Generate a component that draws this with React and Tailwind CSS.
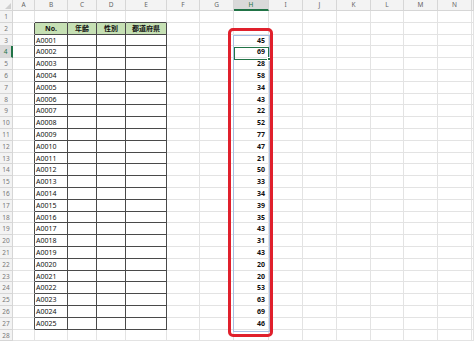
import React from 'react';

const letters = ['A', 'B', 'C', 'D', 'E', 'F', 'G', 'H', 'I', 'J', 'K', 'L', 'M', 'N', ''];
const ages = [45, 69, 28, 58, 34, 43, 22, 52, 77, 47, 21, 50, 33, 34, 39, 35, 43, 31, 43, 20, 20, 53, 63, 69, 46];
const heads = ['No.', '年齢', '性別', '都道府県'];
const rows = Array.from({ length: 28 }, (_, i) => i + 1);

const font = { fontFamily: '"Noto Sans", "Noto Sans CJK JP", sans-serif' };

function Cell({ r, c }) {
  // c: 1 = A, 2 = B ... 8 = H
  const inTable = r >= 2 && r <= 27 && c >= 2 && c <= 5;
  const leftOfTable = r >= 2 && r <= 27 && c === 1;
  const aboveTable = r === 1 && c >= 2 && c <= 5;

  let cls = 'h-[11.8px] border-r border-b overflow-hidden whitespace-nowrap text-[7px] leading-[11px] text-[#111] ';
  if (inTable) cls += 'border-[#4a4a4a] ';
  else if (leftOfTable) cls += 'border-r-[#4a4a4a] border-b-[#e3e3e3] ';
  else if (aboveTable) cls += 'border-b-[#4a4a4a] border-r-[#e3e3e3] ';
  else cls += 'border-[#e3e3e3] ';

  let content = null;
  if (r === 2 && c >= 2 && c <= 5) {
    cls += 'bg-[#c6e0b4] font-bold text-center ';
    content = heads[c - 2];
  } else if (inTable && c === 2) {
    cls += 'pl-[1px] ';
    content = 'A' + String(r - 2).padStart(4, '0');
  } else if (c === 8 && r >= 3 && r <= 27) {
    cls += 'font-bold text-right pr-[3px] ';
    content = ages[r - 3];
  }
  return <div className={cls}>{content}</div>;
}

export default function App() {
  return (
    <div className="w-[474px] h-[343px] overflow-hidden bg-white relative" style={font}>
      <div className="grid grid-cols-[13px_22px_33px_29px_29px_41px_33px_34px_35px_34px_34px_34px_33px_34px_34px_1fr]">
        {/* column headers */}
        <div className="h-[11px] bg-[#f3f3f3] border-r border-b border-[#d6d6d6] relative">
          <div className="absolute right-[1px] bottom-[1px] w-0 h-0 border-l-[6px] border-l-transparent border-b-[6px] border-b-[#cfcfcf]" />
        </div>
        {letters.map((l, i) => (
          <div
            key={l + i}
            className={
              i === 7
                ? 'h-[11px] bg-[#d9d9d9] border-r border-[#d6d6d6] border-b-2 border-b-[#217346] text-[6.5px] leading-[10px] text-center text-[#217346]'
                : 'h-[11px] bg-[#f3f3f3] border-r border-b border-[#d6d6d6] text-[6.5px] leading-[10px] text-center text-[#666]'
            }
          >
            {l}
          </div>
        ))}

        {rows.map((r) => (
          <React.Fragment key={r}>
            <div
              className={
                r === 4
                  ? 'h-[11.8px] bg-[#d9d9d9] border-b border-[#d6d6d6] border-r-2 border-r-[#217346] text-[6.5px] leading-[11px] text-center text-[#217346]'
                  : 'h-[11.8px] bg-[#f3f3f3] border-r border-b border-[#d6d6d6] text-[6.5px] leading-[11px] text-center text-[#777]'
              }
            >
              {r}
            </div>
            {letters.map((l, i) => (
              <Cell key={i} r={r} c={i + 1} />
            ))}
          </React.Fragment>
        ))}
      </div>

      {/* selected range H3:H27 */}
      <div className="absolute left-[233px] top-[35px] w-[37px] h-[297px] border-[1.5px] border-[#a9bfe2] pointer-events-none" />
      {/* active cell H4 */}
      <div className="absolute left-[234px] top-[46.5px] w-[35px] h-[13px] border-[1.5px] border-[#217346] pointer-events-none">
        <div className="absolute right-[-2.5px] bottom-[-2.5px] w-[4px] h-[4px] bg-[#217346] border border-white" />
      </div>
      {/* red highlight box */}
      <div className="absolute left-[228px] top-[28px] w-[45px] h-[309px] border-[3px] border-[#e0202c] rounded-[5px] pointer-events-none" />
    </div>
  );
}
